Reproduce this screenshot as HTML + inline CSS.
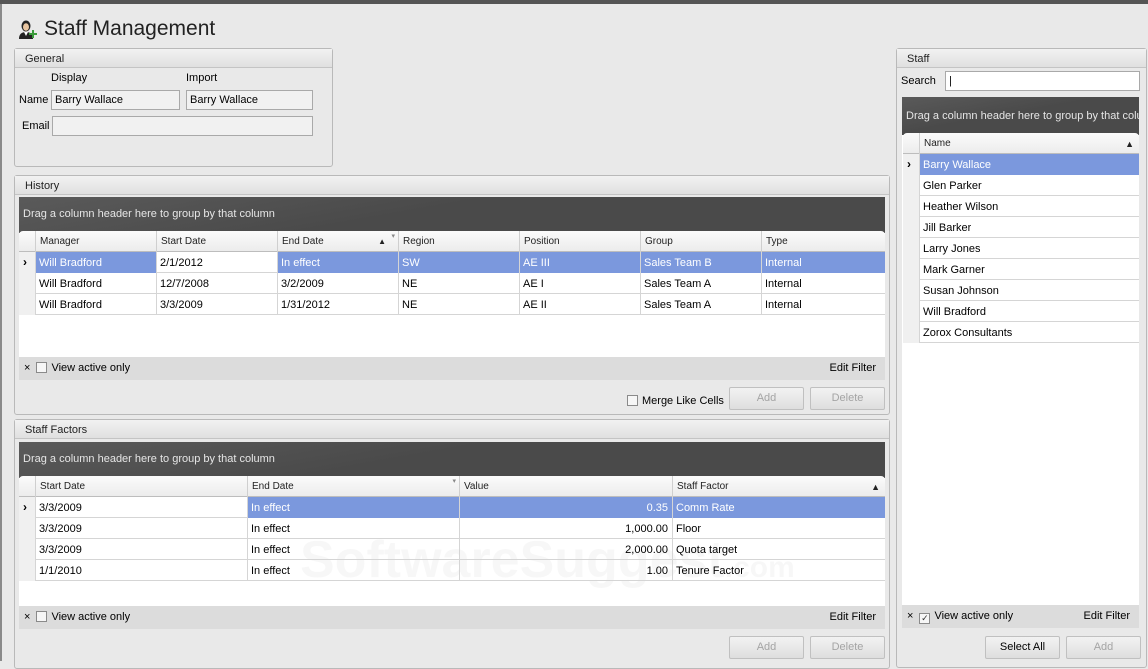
<!DOCTYPE html>
<html><head><meta charset="utf-8">
<style>
*{box-sizing:border-box;margin:0;padding:0}
body{width:1148px;height:661px;overflow:hidden;background:#e9e9e9;font-family:"Liberation Sans",Tahoma,sans-serif;font-size:11px;color:#000;position:relative}
.a{position:absolute}
.panel{position:absolute;border:1px solid #b9b9b9;border-radius:3px;background:#e9e9e9}
.ph{position:absolute;left:0;right:0;top:0;height:19px;background:linear-gradient(#f2f2f2,#e0e0e0);border-bottom:1px solid #c4c4c4;padding-left:10px;line-height:20px;font-size:11px;color:#222}
.inp{position:absolute;background:#f1f1f1;border:1px solid #a9a9a9;padding-left:3px;line-height:18px;font-size:11px}
.dark{position:absolute;background:linear-gradient(170deg,#5a5a5a 0%,#4a4a4a 45%,#4a4a4a 100%);color:#e6e6e6;padding-left:4px;font-size:11px}
.hdr{position:absolute;height:21px;background:linear-gradient(#fbfbfb,#ececec);border-bottom:1px solid #bdbdbd;border-top-left-radius:4px;border-top-right-radius:4px}
.hc{position:absolute;top:0;height:21px;line-height:22px;border-left:1px solid #cfcfcf;padding-left:4px;font-size:10px;color:#222}
.row{position:absolute;height:21px;background:#fff;border-bottom:1px solid #d5d5d5}
.c{position:absolute;top:0;height:21px;line-height:22px;border-left:1px solid #d5d5d5;padding-left:3px;white-space:nowrap;overflow:hidden}
.sel{background:#7b98dd;color:#fff}
.ind{position:absolute;top:0;left:0;width:16px;height:21px;background:#f0f0f0;line-height:21px;font-weight:bold;font-size:12px;padding-left:4px}
.fb{position:absolute;background:#dcdcdc;height:23px;line-height:23px}
.cb{display:inline-block;width:11px;height:11px;border:1px solid #8a8a8a;background:#f6f6f6;vertical-align:-2px;margin-right:4px}
.btn{position:absolute;height:23px;border:1px solid #c0c0c0;border-radius:2px;background:linear-gradient(#f2f2f2,#dedede);color:#a4a4a4;text-align:center;line-height:21px}
</style></head><body>
<div class="a" style="left:0;top:0;width:1148px;height:4px;background:#555"></div>
<div class="a" style="left:0;top:4px;width:2px;height:657px;background:#8a8a8a"></div>
<svg class="a" style="left:15px;top:18px" width="22" height="22" viewBox="0 0 22 22">
<path d="M4 21 Q4 14 11 14 Q18 14 18 21Z" fill="#222"/>
<path d="M9 14 L11 18 L13 14Z" fill="#fff"/>
<ellipse cx="11" cy="8" rx="4.5" ry="5.5" fill="#222"/>
<ellipse cx="11" cy="9" rx="3" ry="3.8" fill="#e8c5a0"/>
<path d="M14 15h3v-3h2v3h3v2h-3v3h-2v-3h-3z" fill="#3a9a3a"/>
</svg>
<div class="a" style="left:44px;top:17px;font-size:21px;color:#222">Staff Management</div>

<!-- General -->
<div class="panel" style="left:14px;top:48px;width:319px;height:119px">
<div class="ph">General</div>
</div>
<div class="a" style="left:51px;top:72px">Display</div>
<div class="a" style="left:186px;top:72px">Import</div>
<div class="a" style="left:19px;top:94px">Name</div>
<div class="inp" style="left:51px;top:90px;width:129px;height:20px">Barry Wallace</div>
<div class="inp" style="left:186px;top:90px;width:127px;height:20px">Barry Wallace</div>
<div class="a" style="left:22px;top:120px">Email</div>
<div class="inp" style="left:52px;top:116px;width:261px;height:20px"></div>

<!-- History -->
<div class="panel" style="left:14px;top:175px;width:876px;height:240px"><div class="ph">History</div></div>
<div class="a" style="left:19px;top:197px;width:866px;height:160px;background:#fff"></div>
<div class="dark" style="left:19px;top:197px;width:866px;height:36px;line-height:34px">Drag a column header here to group by that column</div>
<div class="hdr" style="left:19px;top:231px;width:866px">
<div class="hc" style="left:16px">Manager</div><div class="hc" style="left:137px">Start Date</div>
<div class="hc" style="left:258px;width:121px">End Date<span style="position:absolute;right:12px;font-size:8px">▲</span><span style="position:absolute;right:3px;top:-5px;font-size:7px;color:#888">▾</span></div>
<div class="hc" style="left:379px">Region</div><div class="hc" style="left:500px">Position</div><div class="hc" style="left:621px">Group</div><div class="hc" style="left:742px">Type</div>
</div>
<div class="row" style="left:19px;top:252px;width:866px"><div class="ind">›</div>
<div class="c sel" style="left:16px;width:121px">Will Bradford</div><div class="c" style="left:137px;width:121px">2/1/2012</div><div class="c sel" style="left:258px;width:608px">In effect</div>
<div class="c sel" style="left:379px">SW</div><div class="c sel" style="left:500px">AE III</div><div class="c sel" style="left:621px">Sales Team B</div><div class="c sel" style="left:742px;width:124px">Internal</div></div>
<div class="row" style="left:19px;top:273px;width:866px"><div class="ind"></div>
<div class="c" style="left:16px">Will Bradford</div><div class="c" style="left:137px">12/7/2008</div><div class="c" style="left:258px">3/2/2009</div><div class="c" style="left:379px">NE</div><div class="c" style="left:500px">AE I</div><div class="c" style="left:621px">Sales Team A</div><div class="c" style="left:742px">Internal</div></div>
<div class="row" style="left:19px;top:294px;width:866px"><div class="ind"></div>
<div class="c" style="left:16px">Will Bradford</div><div class="c" style="left:137px">3/3/2009</div><div class="c" style="left:258px">1/31/2012</div><div class="c" style="left:379px">NE</div><div class="c" style="left:500px">AE II</div><div class="c" style="left:621px">Sales Team A</div><div class="c" style="left:742px">Internal</div></div>
<div class="fb" style="left:19px;top:357px;width:866px"><span style="margin-left:5px;margin-right:6px">×</span><span class="cb"></span>View active only<span style="position:absolute;right:9px">Edit Filter</span></div>
<div class="a" style="left:627px;top:395px"><span class="cb"></span>Merge Like Cells</div>
<div class="btn" style="left:729px;top:387px;width:75px">Add</div>
<div class="btn" style="left:810px;top:387px;width:75px">Delete</div>

<!-- Staff Factors -->
<div class="panel" style="left:14px;top:419px;width:876px;height:250px"><div class="ph">Staff Factors</div></div>
<div class="a" style="left:19px;top:442px;width:866px;height:164px;background:#fff"></div>
<div class="dark" style="left:19px;top:442px;width:866px;height:36px;line-height:34px">Drag a column header here to group by that column</div>
<div class="hdr" style="left:19px;top:476px;width:866px">
<div class="hc" style="left:16px">Start Date</div>
<div class="hc" style="left:228px;width:212px">End Date<span style="position:absolute;right:3px;top:-5px;font-size:7px;color:#888">▾</span></div>
<div class="hc" style="left:440px">Value</div>
<div class="hc" style="left:653px;width:213px">Staff Factor<span style="position:absolute;right:5px;font-size:9px">▲</span></div>
</div>
<div class="a" style="left:300px;top:530px;font-size:52px;font-weight:bold;color:rgba(0,0,0,0.03);white-space:nowrap">SoftwareSuggest<span style="font-size:30px">.com</span></div>
<div class="row" style="left:19px;top:497px;width:866px"><div class="ind">›</div>
<div class="c" style="left:16px;width:212px">3/3/2009</div><div class="c sel" style="left:228px;width:212px">In effect</div><div class="c sel" style="left:440px;width:213px;text-align:right;padding-right:4px">0.35</div><div class="c sel" style="left:653px;width:213px">Comm Rate</div></div>
<div class="row" style="left:19px;top:518px;width:866px;background:transparent"><div class="ind"></div>
<div class="c" style="left:16px">3/3/2009</div><div class="c" style="left:228px">In effect</div><div class="c" style="left:440px;width:213px;text-align:right;padding-right:4px">1,000.00</div><div class="c" style="left:653px">Floor</div></div>
<div class="row" style="left:19px;top:539px;width:866px;background:transparent"><div class="ind"></div>
<div class="c" style="left:16px">3/3/2009</div><div class="c" style="left:228px">In effect</div><div class="c" style="left:440px;width:213px;text-align:right;padding-right:4px">2,000.00</div><div class="c" style="left:653px">Quota target</div></div>
<div class="row" style="left:19px;top:560px;width:866px;background:transparent"><div class="ind"></div>
<div class="c" style="left:16px">1/1/2010</div><div class="c" style="left:228px">In effect</div><div class="c" style="left:440px;width:213px;text-align:right;padding-right:4px">1.00</div><div class="c" style="left:653px">Tenure Factor</div></div>
<div class="fb" style="left:19px;top:606px;width:866px"><span style="margin-left:5px;margin-right:6px">×</span><span class="cb"></span>View active only<span style="position:absolute;right:9px">Edit Filter</span></div>
<div class="btn" style="left:729px;top:636px;width:75px">Add</div>
<div class="btn" style="left:810px;top:636px;width:75px">Delete</div>

<!-- Staff -->
<div class="panel" style="left:896px;top:48px;width:251px;height:620px"><div class="ph">Staff</div></div>
<div class="a" style="left:901px;top:75px">Search</div>
<div class="inp" style="left:945px;top:71px;width:195px;height:20px;background:#fff">|</div>
<div class="a" style="left:902px;top:97px;width:237px;height:508px;background:#fff"></div>
<div class="dark" style="left:902px;top:97px;width:237px;height:38px;line-height:38px;white-space:nowrap;overflow:hidden">Drag a column header here to group by that column</div>
<div class="hdr" style="left:903px;top:133px;width:236px"><div class="hc" style="left:16px;width:220px">Name<span style="position:absolute;right:5px;font-size:9px">▲</span></div></div>
<div class="row" style="left:903px;top:154px;width:236px"><div class="ind">›</div><div class="c sel" style="left:16px;width:220px">Barry Wallace</div></div>
<div class="row" style="left:903px;top:175px;width:236px"><div class="ind"></div><div class="c" style="left:16px">Glen Parker</div></div>
<div class="row" style="left:903px;top:196px;width:236px"><div class="ind"></div><div class="c" style="left:16px">Heather Wilson</div></div>
<div class="row" style="left:903px;top:217px;width:236px"><div class="ind"></div><div class="c" style="left:16px">Jill Barker</div></div>
<div class="row" style="left:903px;top:238px;width:236px"><div class="ind"></div><div class="c" style="left:16px">Larry Jones</div></div>
<div class="row" style="left:903px;top:259px;width:236px"><div class="ind"></div><div class="c" style="left:16px">Mark Garner</div></div>
<div class="row" style="left:903px;top:280px;width:236px"><div class="ind"></div><div class="c" style="left:16px">Susan Johnson</div></div>
<div class="row" style="left:903px;top:301px;width:236px"><div class="ind"></div><div class="c" style="left:16px">Will Bradford</div></div>
<div class="row" style="left:903px;top:322px;width:236px"><div class="ind"></div><div class="c" style="left:16px">Zorox Consultants</div></div>
<div class="fb" style="left:902px;top:605px;width:237px"><span style="margin-left:5px;margin-right:6px">×</span><span class="cb" style="text-align:center;line-height:9px;font-size:9px;color:#333">✓</span>View active only<span style="position:absolute;right:9px">Edit Filter</span></div>
<div class="btn" style="left:985px;top:636px;width:75px;color:#000">Select All</div>
<div class="btn" style="left:1066px;top:636px;width:75px">Add</div>
</body></html>
